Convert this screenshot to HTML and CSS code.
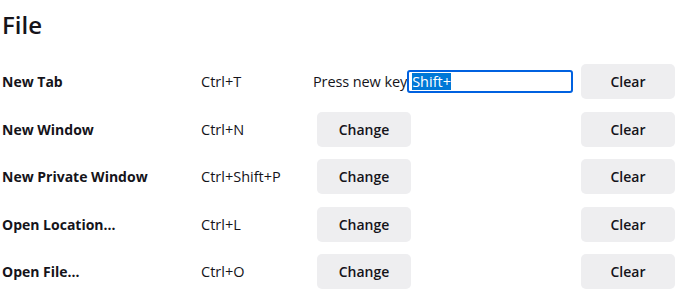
FILE: index.html
```html
<!DOCTYPE html>
<html>
<head>
<meta charset="utf-8">
<link rel="stylesheet" href="styles.css">
</head>
<body>
<h1 class="title">File</h1>
<div class="list">
  <div class="row">
    <span class="name">New Tab</span>
    <span class="key">Ctrl+T</span>
    <span class="edit"><span class="prompt">Press new key</span><span class="input"><span class="sel">Shift+</span></span></span>
    <button class="btn clear">Clear</button>
  </div>
  <div class="row">
    <span class="name">New Window</span>
    <span class="key">Ctrl+N</span>
    <span class="edit"><button class="btn change">Change</button></span>
    <button class="btn clear">Clear</button>
  </div>
  <div class="row">
    <span class="name">New Private Window</span>
    <span class="key">Ctrl+Shift+P</span>
    <span class="edit"><button class="btn change">Change</button></span>
    <button class="btn clear">Clear</button>
  </div>
  <div class="row">
    <span class="name">Open Location…</span>
    <span class="key">Ctrl+L</span>
    <span class="edit"><button class="btn change">Change</button></span>
    <button class="btn clear">Clear</button>
  </div>
  <div class="row">
    <span class="name">Open File…</span>
    <span class="key">Ctrl+O</span>
    <span class="edit"><button class="btn change">Change</button></span>
    <button class="btn clear">Clear</button>
  </div>
</div>
</body>
</html>
```
FILE: styles.css
```css
html, body {
  margin: 0;
  padding: 0;
  background: #ffffff;
}
body {
  font-family: "Open Sans", "Noto Sans", sans-serif;
  color: #15141a;
  font-size: 14.5px;
  padding: 8px 0 0 2px;
}
.title {
  margin: 0;
  font-size: 24px;
  font-weight: 600;
  line-height: 33px;
}
.list {
  margin-top: 23px;
  display: flex;
  flex-direction: column;
  gap: 12.5px;
}
.row {
  display: grid;
  grid-template-columns: 199px 112px 268px 94px;
  align-items: center;
  height: 35px;
}
.name {
  font-weight: 700;
  font-size: 14px;
}
.edit {
  display: flex;
  align-items: center;
}
.prompt {
  margin-right: 0;
  letter-spacing: -0.1px;
}
.input {
  width: 159px;
  height: 19px;
  border: 2px solid #0061e0;
  border-radius: 3px;
  display: flex;
  align-items: center;
  padding-left: 3px;
  box-sizing: content-box;
}
.sel {
  background: #0078d7;
  color: #ffffff;
  line-height: 17px;
}
.btn {
  font-family: inherit;
  font-size: 14px;
  font-weight: 600;
  color: #15141a;
  background: #eeeef0;
  border: none;
  border-radius: 5px;
  height: 35px;
  width: 94px;
  padding: 0;
}
.change {
  margin-left: 4px;
}
```
